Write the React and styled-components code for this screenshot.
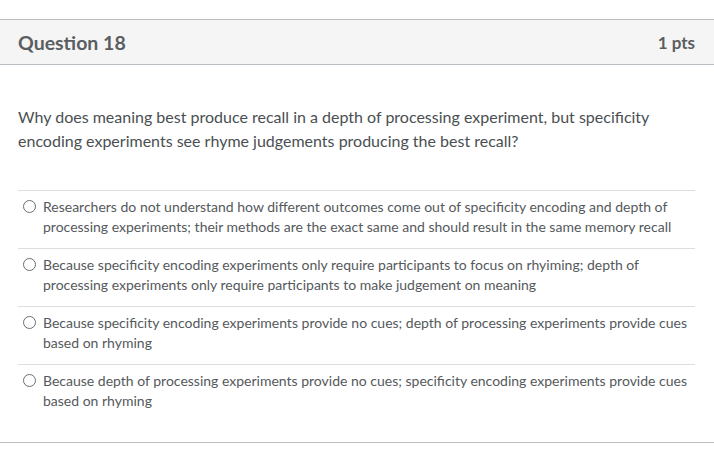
import styled, { createGlobalStyle } from 'styled-components';

const GlobalStyle = createGlobalStyle`
  body {
    margin: 0;
    background: #fff;
    font-family: Lato, "Open Sans", sans-serif;
  }
`;

const answers = [
  'Researchers do not understand how different outcomes come out of specificity encoding and depth of processing experiments; their methods are the exact same and should result in the same memory recall',
  'Because specificity encoding experiments only require participants to focus on rhyiming; depth of processing experiments only require participants to make judgement on meaning',
  'Because specificity encoding experiments provide no cues; depth of processing experiments provide cues based on rhyming',
  'Because depth of processing experiments provide no cues; specificity encoding experiments provide cues based on rhyming',
];

export default function App() {
  return (
    <>
      <GlobalStyle />
      <Card>
        <Header>
          <Title>Question 18</Title>
          <Points>1 pts</Points>
        </Header>
        <Body>
          <QuestionText>
            Why does meaning best produce recall in a depth of processing experiment, but specificity
            encoding experiments see rhyme judgements producing the best recall?
          </QuestionText>
          <AnswerList>
            {answers.map((a, i) => (
              <Answer key={i}>
                <Radio />
                <AnswerText>{a}</AnswerText>
              </Answer>
            ))}
          </AnswerList>
        </Body>
      </Card>
    </>
  );
}

const Card = styled.div`
  margin-top: 19px;
  border-bottom: 1px solid #b8bdc1;
`;

const Header = styled.div`
  display: flex;
  justify-content: space-between;
  align-items: center;
  height: 44px;
  padding: 0 19px 0 18px;
  background: #f5f5f5;
  border-top: 1px solid #b8bdc1;
  border-bottom: 1px solid #b8bdc1;
  color: #5a5e61;
`;

const Title = styled.h2`
  margin: 0;
  font-size: 19.5px;
  font-weight: 700;
`;

const Points = styled.div`
  font-size: 17px;
  font-weight: 700;
`;

const Body = styled.div`
  padding: 40px 19px 20px 18px;
`;

const QuestionText = styled.p`
  margin: 0 0 37px;
  font-size: 16px;
  line-height: 24px;
  color: #4a4f52;
`;

const AnswerList = styled.div``;

const Answer = styled.label`
  display: flex;
  align-items: flex-start;
  gap: 7px;
  padding: 6px 0 11px 5px;
  border-top: 1px solid #dcdfe1;
  font-size: 14px;
  line-height: 20px;
  color: #55595c;
`;

const Radio = styled.span`
  flex: none;
  width: 11px;
  height: 11px;
  margin-top: 3px;
  border: 1px solid #6a6e71;
  border-radius: 50%;
`;

const AnswerText = styled.span``;
